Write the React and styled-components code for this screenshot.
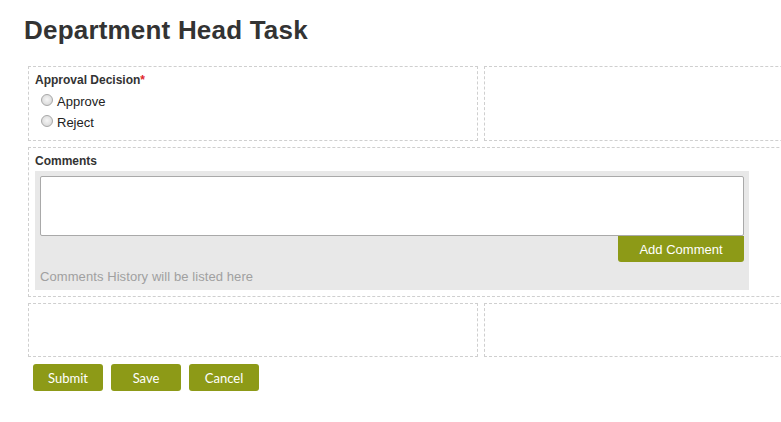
import React from "react";
import styled, { createGlobalStyle } from "styled-components";

const Global = createGlobalStyle`
  html, body { margin: 0; padding: 0; background: #fff; overflow: hidden; }
  body { font-family: "Liberation Sans", Arial, sans-serif; color: #333; }
  * { box-sizing: border-box; }
`;

const Page = styled.div`
  padding-top: 15px;
  width: 1000px;
`;

const Title = styled.h1`
  margin: 0 0 21px 24px;
  font-size: 26px;
  line-height: 30px;
  letter-spacing: 0.2px;
  font-weight: bold;
  color: #333;
`;

const Form = styled.div`
  margin-left: 28px;
  display: flex;
  flex-direction: column;
  gap: 6px;
`;

const Row = styled.div`
  display: flex;
  gap: 6px;
`;

const Cell = styled.div`
  border: 1px dashed #cfcfcf;
  width: ${(p) => p.$w || 450}px;
  height: ${(p) => p.$h}px;
  padding: 6px;
`;

const Label = styled.div`
  font-size: 12px;
  font-weight: bold;
  line-height: 14px;
  color: #333;
`;

const Required = styled.span`
  color: #e0262b;
`;

const RadioGroup = styled.div`
  margin-top: 4px;
  padding-left: 6px;
  display: flex;
  flex-direction: column;
`;

const RadioRow = styled.label`
  display: flex;
  align-items: center;
  gap: 4px;
  height: 21px;
  font-size: 13px;
  color: #222;
`;

const Radio = styled.input.attrs({ type: "radio" })`
  appearance: none;
  margin: 0 0 3px 0;
  width: 12px;
  height: 12px;
  border-radius: 50%;
  border: 1px solid #a8a8a8;
  background: radial-gradient(circle at 50% 45%, #f6f6f6 0%, #e2e2e2 55%, #cdcdcd 100%);
`;

const CommentBox = styled.div`
  margin-top: 3px;
  width: 714px;
  background: #e8e8e8;
  padding: 5px 5px 6px 5px;
  display: flex;
  flex-direction: column;
`;

const TextArea = styled.textarea`
  display: block;
  width: 704px;
  height: 60px;
  margin: 0;
  border: 1px solid #a9a9a9;
  border-radius: 2px;
  background: #fff;
  resize: none;
  font-family: "Liberation Sans", Arial, sans-serif;
`;

const AddButton = styled.button`
  align-self: flex-end;
  width: 126px;
  height: 26px;
  border: none;
  border-radius: 0 0 3px 3px;
  background: #8d9a17;
  color: #fff;
  font-family: "Liberation Sans", Arial, sans-serif;
  font-size: 13px;
  padding: 0;
`;

const History = styled.div`
  margin-top: 7px;
  font-size: 13px;
  line-height: 15px;
  letter-spacing: 0.08px;
  color: #a0a0a0;
`;

const Actions = styled.div`
  display: flex;
  gap: 8px;
  margin: 7px 0 0 33px;
`;

const ActionButton = styled.button`
  width: 70px;
  height: 27px;
  border: none;
  border-radius: 3px;
  background: #8d9a17;
  color: #fff;
  font-family: "Lato", "Open Sans", sans-serif;
  font-size: 13px;
  padding: 0;
`;

export default function App() {
  return (
    <Page>
      <Global />
      <Title>Department Head Task</Title>
      <Form>
        <Row>
          <Cell $h={75}>
            <Label>
              Approval Decision<Required>*</Required>
            </Label>
            <RadioGroup>
              <RadioRow>
                <Radio name="decision" />
                Approve
              </RadioRow>
              <RadioRow>
                <Radio name="decision" />
                Reject
              </RadioRow>
            </RadioGroup>
          </Cell>
          <Cell $h={75} />
        </Row>
        <Row>
          <Cell $w={906} $h={150}>
            <Label>Comments</Label>
            <CommentBox>
              <TextArea />
              <AddButton>Add Comment</AddButton>
              <History>Comments History will be listed here</History>
            </CommentBox>
          </Cell>
        </Row>
        <Row>
          <Cell $h={54} />
          <Cell $h={54} />
        </Row>
      </Form>
      <Actions>
        <ActionButton>Submit</ActionButton>
        <ActionButton>Save</ActionButton>
        <ActionButton>Cancel</ActionButton>
      </Actions>
    </Page>
  );
}
